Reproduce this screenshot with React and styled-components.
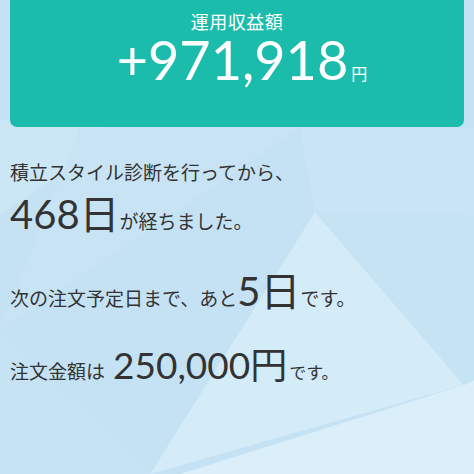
import React from 'react'
import styled, { createGlobalStyle } from 'styled-components'

const Global = createGlobalStyle`
  html, body {
    margin: 0;
    padding: 0;
  }
  body {
    font-family: Lato, "Noto Sans CJK JP", sans-serif;
    color: #333;
  }
`

const Page = styled.div`
  position: relative;
  width: 474px;
  height: 474px;
  overflow: hidden;
  background: #c4e2f3;
`

const Facets = styled.svg`
  position: absolute;
  inset: 0;
  width: 100%;
  height: 100%;
  z-index: 0;
`

const Content = styled.div`
  position: relative;
  z-index: 1;
  padding: 0 10px;
`

const Card = styled.div`
  background: #1cbcad;
  border-radius: 0 0 7px 7px;
  padding: 11px 0 40px;
  display: flex;
  flex-direction: column;
  align-items: center;
  color: #fff;
`

const CardLabel = styled.div`
  font-size: 18px;
  line-height: 22px;
  letter-spacing: 0.5px;
`

const Amount = styled.div`
  display: flex;
  align-items: baseline;
  margin-left: 10px;
`

const Figure = styled.span`
  font-size: ${p => p.$size}px;
  line-height: 1;
  font-weight: 400;
  margin-left: ${p => p.$gap || 0}px;
`

const Unit = styled.span`
  font-size: ${p => p.$size}px;
  line-height: 1;
  margin-left: ${p => p.$gap || 0}px;
`

const Row = styled.div`
  display: flex;
  align-items: baseline;
  margin-top: ${p => p.$mt}px;
  white-space: nowrap;
`

const Text = styled.span`
  font-size: ${p => p.$size || 19}px;
  line-height: 1;
  margin-left: ${p => p.$gap || 0}px;
`

export default function App() {
  return (
    <Page>
      <Global />
      <Facets viewBox="0 0 474 474" preserveAspectRatio="none">
        <polygon points="0,120 110,120 60,175 0,215" fill="#cbe6f5" />
        <polygon points="80,128 300,128 0,330" fill="#c8e4f4" />
        <polygon points="300,128 474,128 474,215 315,212" fill="#c9e5f5" />
        <polygon points="315,212 464,385 150,474" fill="#d4ebf8" />
        <polygon points="464,385 474,380 474,474 180,474" fill="#dbeffa" />
        <polygon points="315,212 474,215 474,380 464,385" fill="#c6e3f4" />
        <polygon points="0,330 150,474 0,474" fill="#c6e3f3" />
      </Facets>
      <Content>
        <Card>
          <CardLabel>運用収益額</CardLabel>
          <Amount>
            <Figure $size={54}>+971,918</Figure>
            <Unit $size={16} $gap={3}>円</Unit>
          </Amount>
        </Card>

        <Row $mt={36}>
          <Text>積立スタイル診断を行ってから、</Text>
        </Row>

        <Row $mt={12}>
          <Figure $size={40}>468日</Figure>
          <Text $gap={0}>が経ちました。</Text>
        </Row>

        <Row $mt={37}>
          <Text>次の注文予定日まで、あと</Text>
          <Figure $size={40}>5日</Figure>
          <Text $gap={0}>です。</Text>
        </Row>

        <Row $mt={35}>
          <Text>注文金額は</Text>
          <Figure $size={37} $gap={8}>250,000円</Figure>
          <Text $gap={2} $size={17}>です。</Text>
        </Row>
      </Content>
    </Page>
  )
}
